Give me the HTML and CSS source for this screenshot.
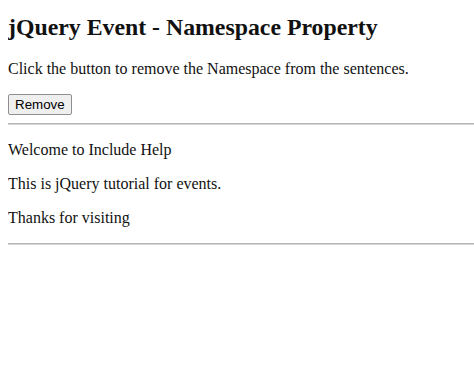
FILE: index.html
```html
<!DOCTYPE html>
<html>
<head>
<meta charset="utf-8">
<link rel="stylesheet" href="styles.css">
</head>
<body>
<h2 class="title">jQuery Event - Namespace Property</h2>
<p class="text">Click the button to remove the Namespace from the sentences.</p>
<button class="btn">Remove</button>
<hr class="rule">
<p class="text">Welcome to Include Help</p>
<p class="text">This is jQuery tutorial for events.</p>
<p class="text">Thanks for visiting</p>
<hr class="rule">
</body>
</html>
```
FILE: styles.css
```css
html {
  background: #fff;
}
body {
  margin: 8px 0 8px 8px;
  font-family: "Liberation Serif", "Times New Roman", serif;
  color: #111;
  background: #fff;
}
.title {
  font-size: 23.8px;
  font-weight: bold;
  margin: 5.5px 0 19.92px;
}
.text {
  font-size: 16px;
  margin: 16px 0;
}
.btn {
  display: block;
  font-family: "Liberation Sans", Arial, sans-serif;
  font-size: 13.33px;
  padding: 2px 6px;
  border: 1px solid #8f8f8f;
  border-radius: 2px;
  background: #efefef;
  color: #000;
}
.rule {
  margin: 8px 0;
  border: none;
  border-top: 1px solid #b4b4b4;
  border-bottom: 1px solid #d6d6d6;
}
```
